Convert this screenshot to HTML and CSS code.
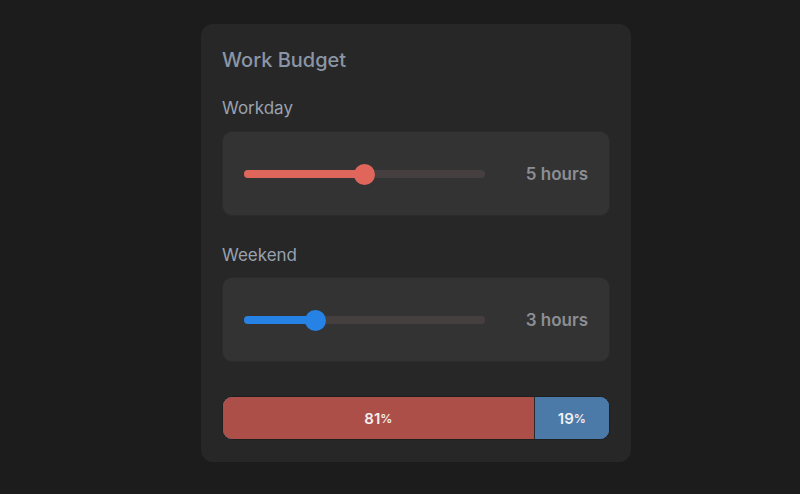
FILE: index.html
```html
<!DOCTYPE html>
<html lang="en">
<head>
<meta charset="utf-8">
<title>Work Budget</title>
<link rel="stylesheet" href="styles.css">
</head>
<body>
<main class="card">
  <h1 class="title">Work Budget</h1>
  <section class="group">
    <div class="label">Workday</div>
    <div class="box">
      <div class="slider">
        <div class="fill fill-red" style="width: 50%"><span class="thumb thumb-red"></span></div>
      </div>
      <div class="value">5 hours</div>
    </div>
  </section>
  <section class="group group-second">
    <div class="label">Weekend</div>
    <div class="box">
      <div class="slider">
        <div class="fill fill-blue" style="width: 30%"><span class="thumb thumb-blue"></span></div>
      </div>
      <div class="value">3 hours</div>
    </div>
  </section>
  <div class="split">
    <div class="seg seg-red" style="width: 80.5%">81<span class="pct">%</span></div>
    <div class="seg seg-blue">19<span class="pct">%</span></div>
  </div>
</main>
</body>
</html>
```
FILE: styles.css
```css
html, body {
  margin: 0;
  padding: 0;
  background: #1c1c1c;
  font-family: Inter, "Noto Sans", "Liberation Sans", sans-serif;
}
body {
  width: 800px;
  height: 494px;
  overflow: hidden;
}
.card {
  box-sizing: border-box;
  width: 430px;
  margin: 24px 0 0 201px;
  background: #272727;
  border-radius: 12px;
  padding: 24px 21px 22px 21px;
  display: flex;
  flex-direction: column;
}
.title {
  margin: 0;
  font-size: 20px;
  line-height: 24px;
  font-weight: 500;
  color: #8a96a6;
}
.group {
  margin-top: 26px;
  display: flex;
  flex-direction: column;
  gap: 13px;
}
.group-second {
  margin-top: 29px;
  gap: 12px;
}
.label {
  font-size: 17px;
  line-height: 20px;
  color: #99a2af;
}
.box {
  box-sizing: border-box;
  height: 85px;
  background: #333333;
  border: 1px solid #2b2b2b;
  border-radius: 10px;
  display: flex;
  align-items: center;
  justify-content: space-between;
  padding: 0 21px 0 21px;
}
.slider {
  position: relative;
  width: 241px;
  height: 8px;
  border-radius: 4px;
  background-color: #463f3f;
  background-image: radial-gradient(circle, #3d3737 40%, transparent 45%);
  background-size: 2px 2px;
}
.fill {
  position: relative;
  height: 8px;
  border-radius: 4px;
}
.fill-red { background: #e0665c; }
.fill-blue { background: #2682e4; }
.thumb {
  position: absolute;
  right: -10px;
  top: -6px;
  width: 21px;
  height: 21px;
  border-radius: 50%;
}
.thumb-red { background: #e0665c; }
.thumb-blue { background: #2682e4; }
.value {
  font-size: 17px;
  font-weight: 600;
  color: #8b8e93;
}
.split {
  box-sizing: border-box;
  margin-top: 34px;
  height: 44px;
  flex-shrink: 0;
  display: flex;
  border: 1px solid #1f1f1f;
  border-radius: 10px;
  overflow: hidden;
  background: #4b79a8;
}
.seg {
  display: flex;
  align-items: center;
  justify-content: center;
  font-size: 15px;
  font-weight: 600;
  color: #f0f0f0;
}
.seg-red {
  background: #ac4f48;
  border-right: 1px solid #2a2a2a;
}
.seg-blue {
  flex: 1;
  background: #4b79a8;
}
.pct {
  font-size: 12px;
}
```
